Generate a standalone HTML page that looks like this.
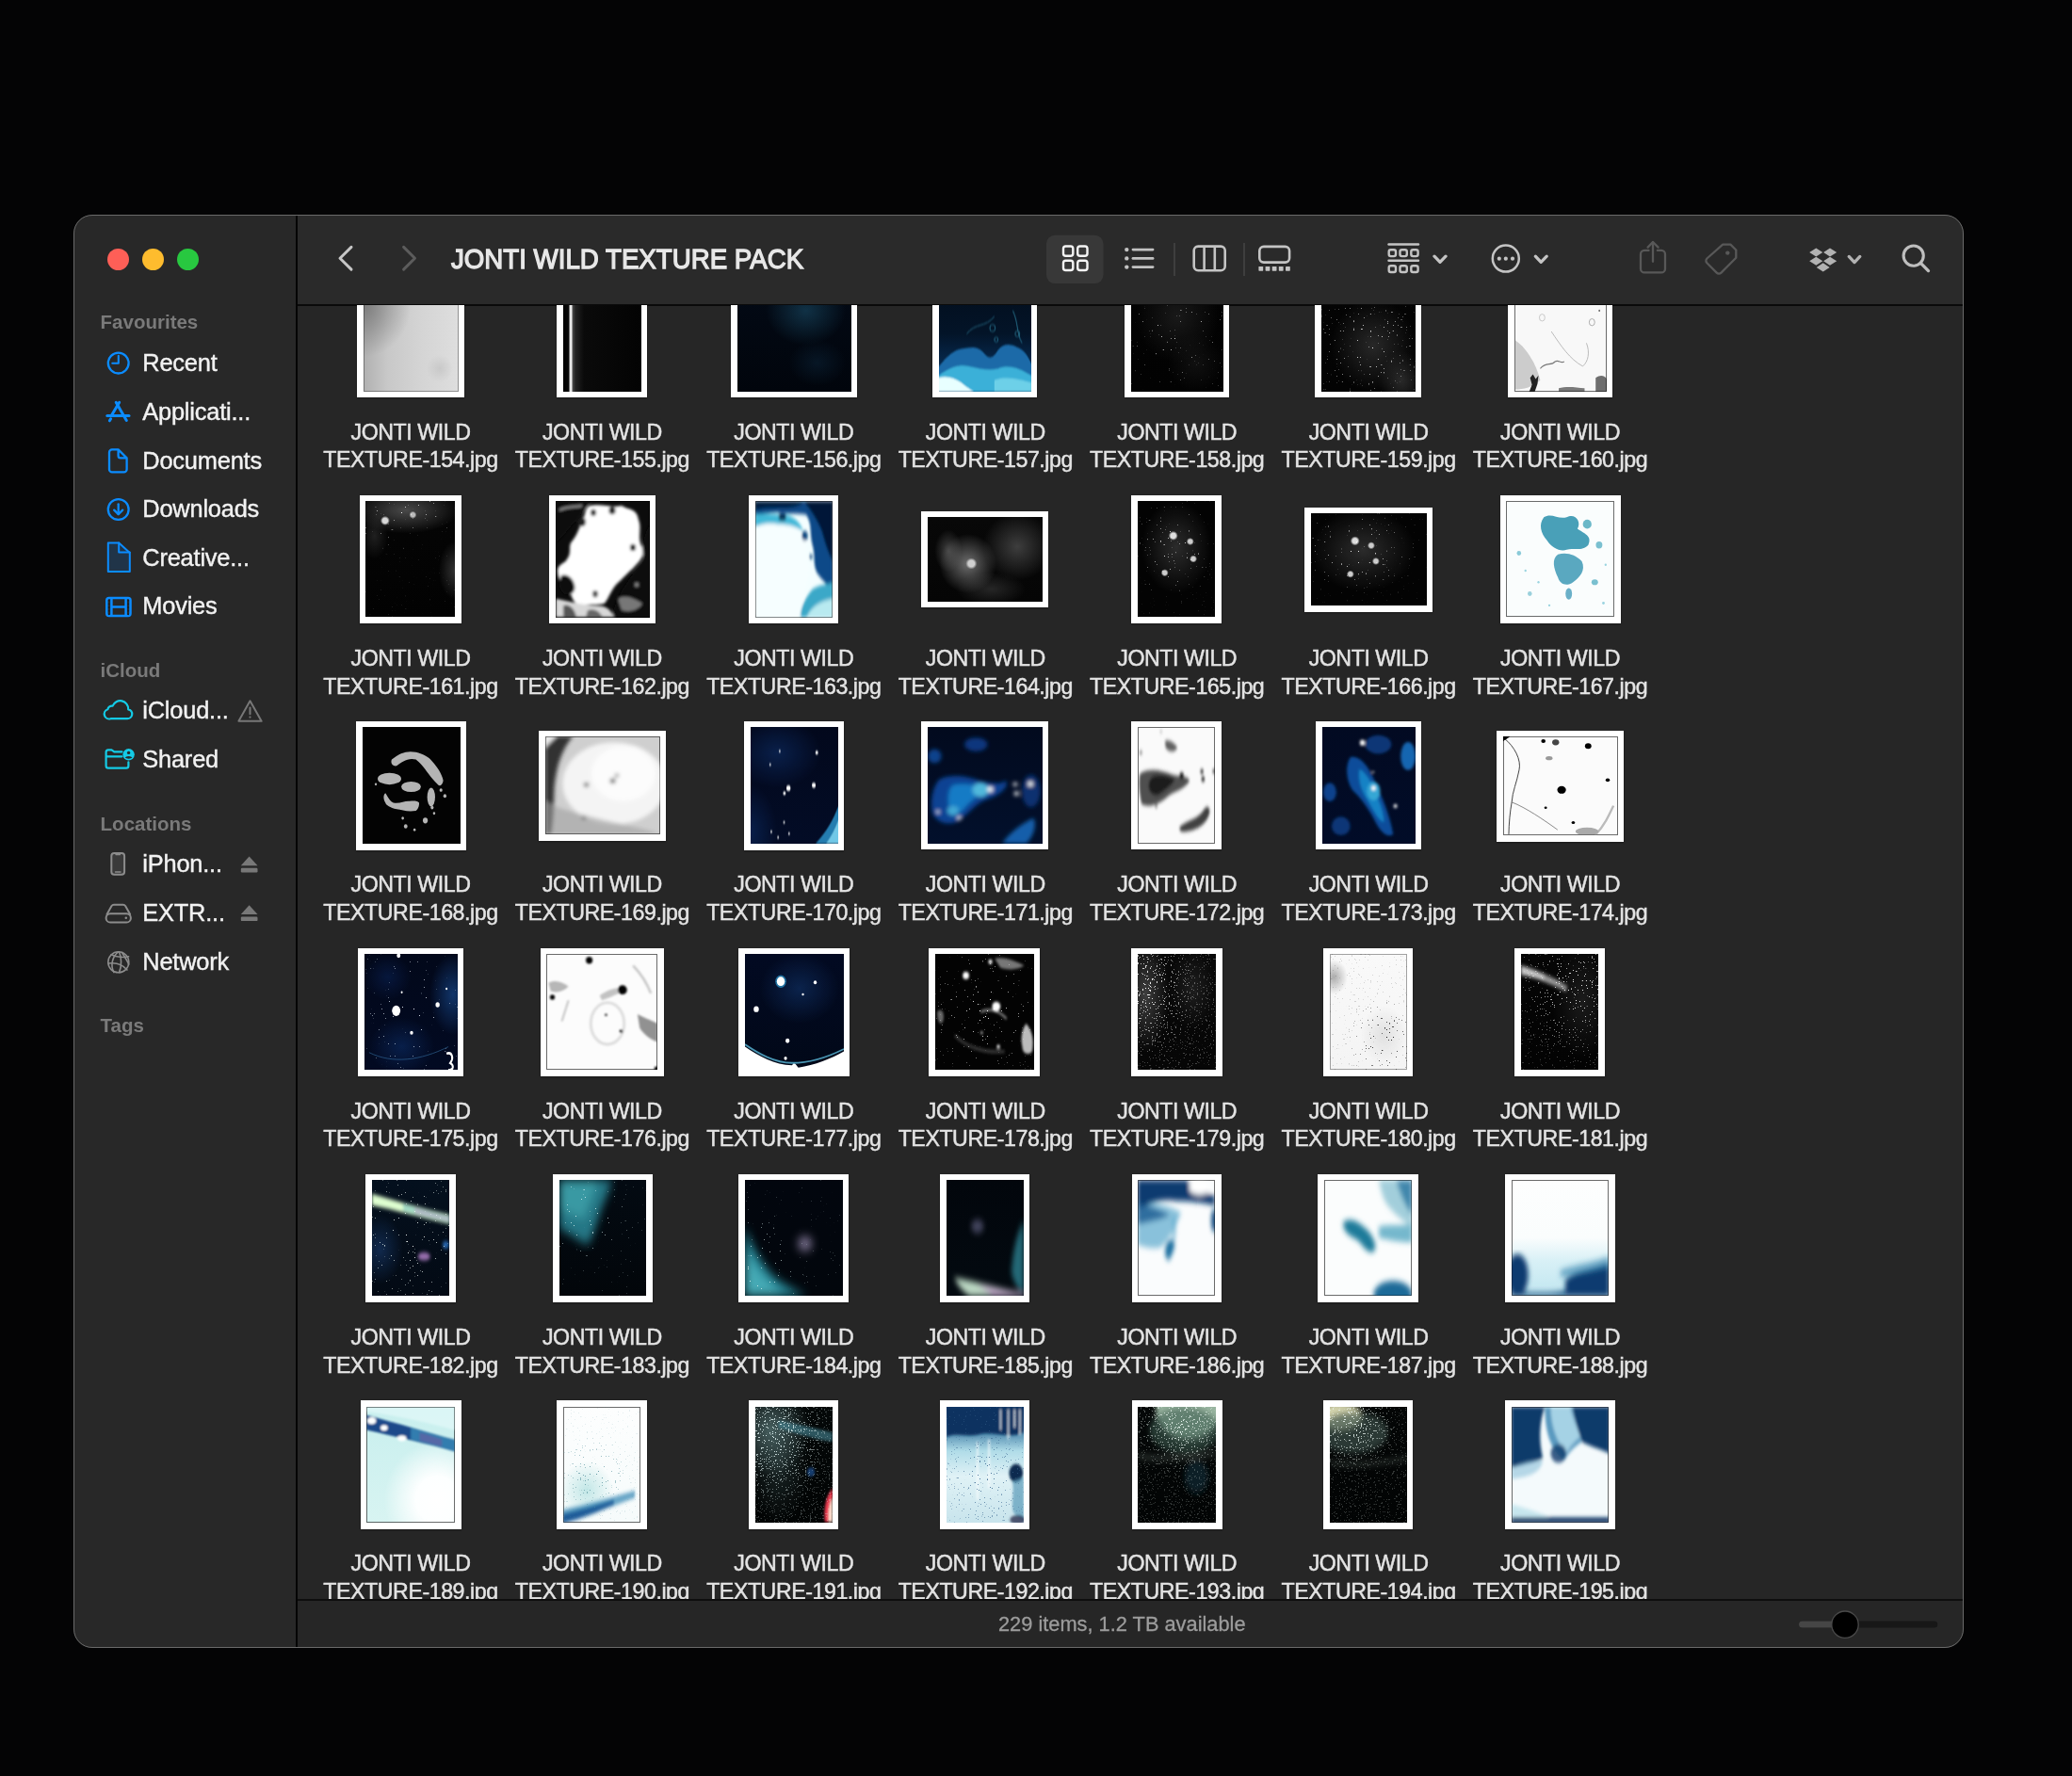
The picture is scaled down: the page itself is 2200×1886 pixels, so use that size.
<!DOCTYPE html>
<html><head><meta charset="utf-8">
<style>
*{margin:0;padding:0;box-sizing:border-box}
html,body{width:2200px;height:1886px;overflow:hidden;background:#040405;font-family:"Liberation Sans",sans-serif}
#root{position:absolute;left:0;top:0;width:2200px;height:1886px;will-change:transform}
.abs{position:absolute}
#win{position:absolute;left:78px;top:228px;width:2007px;height:1522px;border-radius:20px;background:#262626;overflow:hidden}
#winb{position:absolute;left:78px;top:228px;width:2007px;height:1522px;border-radius:20px;border:1px solid #6a6a6a}
#side{position:absolute;left:1px;top:1px;width:235px;height:1520px;background:#282828;border-radius:19px 0 0 19px}
#sdiv{position:absolute;left:236px;top:0;width:2px;height:1522px;background:#050505}
#tb{position:absolute;left:238px;top:1px;width:1768px;height:94px;background:#2a2a2a;border-radius:0 19px 0 0}
#tbline{position:absolute;left:238px;top:94.5px;width:1768px;height:2px;background:#0a0a0a}
#stline{position:absolute;left:238px;top:1469.5px;width:1768px;height:2px;background:#0e0e0e}
#status{position:absolute;left:238px;top:1471.5px;width:1768px;height:50px;background:#262626;border-radius:0 0 19px 0}
.hdr{position:absolute;left:106.6px;font-size:20.5px;font-weight:700;color:#7a7a7a;white-space:nowrap;line-height:24px}
.it{position:absolute;left:151.3px;font-size:25.4px;letter-spacing:-0.2px;color:#f2f2f2;white-space:nowrap;line-height:30px;-webkit-text-stroke:0.4px #f2f2f2}
#content{position:absolute;left:0;top:0;width:2200px;height:1886px;clip-path:inset(324px 116px 188px 317px)}
.th{position:absolute;background:#fff;padding:6.5px;box-shadow:0 1px 2px rgba(0,0,0,.35)}
.in{width:100%;height:100%}
.lb{position:absolute;width:220px;text-align:center;font-size:23.2px;letter-spacing:-0.45px;line-height:29.6px;color:#e4e4e4;white-space:nowrap;-webkit-text-stroke:0.45px #e4e4e4}
#title{position:absolute;left:479px;top:258.3px;font-size:29.5px;font-weight:400;color:#e8e8e8;white-space:nowrap;line-height:34px;transform:scaleX(0.938);transform-origin:0 0;-webkit-text-stroke:1.3px #e8e8e8}
#stat{position:absolute;left:1060px;top:1712.2px;font-size:21.8px;color:#9c9c9c;white-space:nowrap;line-height:26px;-webkit-text-stroke:0.3px #9c9c9c}
svg{position:absolute;overflow:visible}
</style></head><body><div id="root">
<div id="win">
  <div id="side"></div>
  <div id="sdiv"></div>
  <div id="tb"></div>
  <div id="tbline"></div>
  <div id="stline"></div>
  <div id="status"></div>
</div>

<!-- traffic lights -->
<div class="abs" style="left:114px;top:264px;width:23px;height:23px;border-radius:50%;background:#fe5f57"></div>
<div class="abs" style="left:151px;top:264px;width:23px;height:23px;border-radius:50%;background:#febc2e"></div>
<div class="abs" style="left:188px;top:264px;width:23px;height:23px;border-radius:50%;background:#28c840"></div>

<!-- sidebar -->
<div class="hdr" style="top:330.4px">Favourites</div>
<div class="it" style="top:370.1px">Recent</div>
<div class="it" style="top:421.7px">Applicati...</div>
<div class="it" style="top:473.8px">Documents</div>
<div class="it" style="top:525.2px">Downloads</div>
<div class="it" style="top:576.8px">Creative...</div>
<div class="it" style="top:628.2px">Movies</div>
<div class="hdr" style="top:699.8px">iCloud</div>
<div class="it" style="top:739.2px">iCloud...</div>
<div class="it" style="top:791.2px">Shared</div>
<div class="hdr" style="top:862.9px">Locations</div>
<div class="it" style="top:902.2px">iPhon...</div>
<div class="it" style="top:953.8px">EXTR...</div>
<div class="it" style="top:1006.1px">Network</div>
<div class="hdr" style="top:1076.9px">Tags</div>

<!-- toolbar -->
<div id="title">JONTI WILD TEXTURE PACK</div>
<div id="stat">229 items, 1.2 TB available</div>

<svg width="2200" height="1886" style="position:absolute;left:0;top:0" fill="none" stroke-linecap="round" stroke-linejoin="round">
<!-- back / forward -->
<polyline points="373,262.4 361,274.2 373,286.1" stroke="#c6c6c6" stroke-width="3"/>
<polyline points="428.6,262.4 440.5,274.2 428.6,286.1" stroke="#5c5c5c" stroke-width="3"/>
<!-- selected grid button -->
<rect x="1111" y="249.8" width="60.5" height="51.3" rx="9" fill="#383838" stroke="none"/>
<g stroke="#f4f4f4" stroke-width="2.4">
<rect x="1129" y="261.5" width="10.3" height="10.3" rx="2.6"/>
<rect x="1144.2" y="261.5" width="10.3" height="10.3" rx="2.6"/>
<rect x="1129" y="276.7" width="10.3" height="10.3" rx="2.6"/>
<rect x="1144.2" y="276.7" width="10.3" height="10.3" rx="2.6"/>
</g>
<!-- list -->
<g fill="#c2c2c2" stroke="none">
<circle cx="1196.3" cy="265.1" r="2.2"/><circle cx="1196.3" cy="274.4" r="2.2"/><circle cx="1196.3" cy="283.6" r="2.2"/>
</g>
<g stroke="#c2c2c2" stroke-width="2.9">
<line x1="1203" y1="265.1" x2="1224" y2="265.1"/><line x1="1203" y1="274.4" x2="1224" y2="274.4"/><line x1="1203" y1="283.6" x2="1224" y2="283.6"/>
</g>
<!-- dividers -->
<line x1="1247" y1="258" x2="1247" y2="293" stroke="#3e3e3e" stroke-width="2" stroke-linecap="butt"/>
<line x1="1321" y1="258" x2="1321" y2="293" stroke="#3e3e3e" stroke-width="2" stroke-linecap="butt"/>
<!-- column view -->
<g stroke="#c4c4c4" stroke-width="2.6">
<rect x="1267.7" y="261.6" width="33" height="25.6" rx="4.5"/>
<line x1="1278.6" y1="262" x2="1278.6" y2="287" stroke-linecap="butt"/>
<line x1="1289.8" y1="262" x2="1289.8" y2="287" stroke-linecap="butt"/>
</g>
<!-- gallery -->
<rect x="1337.3" y="261.9" width="31.8" height="16.7" rx="4.5" stroke="#c4c4c4" stroke-width="2.6"/>
<g fill="#c4c4c4" stroke="none">
<rect x="1336.4" y="283" width="4.8" height="4.7" rx=".6"/><rect x="1343.6" y="283" width="4.8" height="4.7" rx=".6"/><rect x="1350.7" y="283" width="4.8" height="4.7" rx=".6"/><rect x="1357.8" y="283" width="4.8" height="4.7" rx=".6"/><rect x="1365" y="283" width="4.8" height="4.7" rx=".6"/>
</g>
<!-- group -->
<g stroke="#c4c4c4" stroke-width="2.4">
<line x1="1474.5" y1="259.5" x2="1506" y2="259.5"/>
<line x1="1474.5" y1="276.7" x2="1506" y2="276.7"/>
<rect x="1474.7" y="265.3" width="7.3" height="6.8" rx="2"/><rect x="1486.5" y="265.3" width="7.3" height="6.8" rx="2"/><rect x="1498.3" y="265.3" width="7.3" height="6.8" rx="2"/>
<rect x="1474.7" y="282.2" width="7.3" height="6.8" rx="2"/><rect x="1486.5" y="282.2" width="7.3" height="6.8" rx="2"/><rect x="1498.3" y="282.2" width="7.3" height="6.8" rx="2"/>
</g>
<polyline points="1523,272.2 1529,278.3 1535,272.2" stroke="#c4c4c4" stroke-width="3.3"/>
<!-- more -->
<circle cx="1598.8" cy="274.6" r="14" stroke="#c4c4c4" stroke-width="2.5"/>
<g fill="#c4c4c4" stroke="none"><circle cx="1591.8" cy="274.7" r="2.1"/><circle cx="1598.8" cy="274.7" r="2.1"/><circle cx="1606" cy="274.7" r="2.1"/></g>
<polyline points="1630.3,272.2 1636.2,278.3 1642.2,272.2" stroke="#c4c4c4" stroke-width="3.3"/>
<!-- share -->
<g stroke="#585858" stroke-width="2.3">
<path d="M1750.5,265.9 H1746 a4,4 0 0 0 -4,4 V285.4 a4,4 0 0 0 4,4 H1764 a4,4 0 0 0 4,-4 V269.9 a4,4 0 0 0 -4,-4 H1759.8"/>
<line x1="1755" y1="257.5" x2="1755" y2="277.8"/>
<polyline points="1749.6,262.6 1755,257 1760.6,262.6"/>
</g>
<!-- tag -->
<path d="M1829.2,259.6 L1837.4,259.6 L1843.3,265.5 L1843.3,273.8 L1827.5,289.6 a3.4,3.4 0 0 1 -4.8,0 L1812.4,279.3 a3.4,3.4 0 0 1 0,-4.8 Z" stroke="#585858" stroke-width="2.3"/>
<circle cx="1834.3" cy="268.6" r="2.2" fill="#585858" stroke="none"/>
<!-- dropbox -->
<g fill="#b2b2b2" stroke="none">
<polygon points="1921.2,267.9 1928.3,263.4 1935.3,267.9 1928.3,272.4"/>
<polygon points="1936.1,267.9 1943,263.4 1950.2,267.9 1943,272.4"/>
<polygon points="1921.2,277.3 1928.3,272.8 1935.3,277.3 1928.3,281.8"/>
<polygon points="1936.1,277.3 1943,272.8 1950.2,277.3 1943,281.8"/>
<polygon points="1928.7,283.9 1935.7,279.3 1942.7,283.9 1935.7,288.4"/>
</g>
<polyline points="1963.2,272.4 1969,278.6 1974.8,272.4" stroke="#b2b2b2" stroke-width="3.3"/>
<!-- search -->
<circle cx="2031.7" cy="271.6" r="10.6" stroke="#bebebe" stroke-width="3.1"/>
<line x1="2039.6" y1="279.6" x2="2047.5" y2="287.6" stroke="#bebebe" stroke-width="3.3"/>

<!-- sidebar icons -->
<g stroke="#0b8cff" stroke-width="2.3">
<circle cx="125.7" cy="385.6" r="10.9"/>
<polyline points="125.8,377.7 125.8,385.8 119.3,385.8" stroke-width="2.1"/>
</g>
<!-- app store -->
<g stroke="#0b8cff" stroke-width="3">
<line x1="126.7" y1="427.3" x2="118.2" y2="441.5"/>
<line x1="123.2" y1="427.3" x2="134.3" y2="446.5"/>
<line x1="113.8" y1="441.5" x2="137" y2="441.5"/>
<line x1="117.6" y1="444.8" x2="116.4" y2="446.8"/>
</g>
<!-- documents -->
<path d="M125.6,477.4 H119 a3,3 0 0 0 -3,3 V498.4 a3,3 0 0 0 3,3 H131.6 a3,3 0 0 0 3,-3 V486.4 Z M125.6,477.4 V484 a2.4,2.4 0 0 0 2.4,2.4 H134.6" stroke="#0b8cff" stroke-width="2.3"/>
<!-- downloads -->
<g stroke="#0b8cff" stroke-width="2.3">
<circle cx="125.7" cy="541" r="10.9"/>
<line x1="125.7" y1="535.3" x2="125.7" y2="546"/>
<polyline points="121.2,541.6 125.7,546.1 130.2,541.6"/>
</g>
<!-- creative (filled doc) -->
<path d="M114.8,576.4 H126.2 L137.8,586.9 V607 H114.8 Z" fill="#203448" stroke="#0b8cff" stroke-width="2" stroke-linejoin="round"/>
<path d="M126.2,576.4 V586.4 H137.8" stroke="#0b8cff" stroke-width="2"/>
<!-- movies -->
<g stroke="#0b8cff" stroke-width="2.5">
<rect x="113.3" y="635.1" width="25.2" height="19" rx="2.5"/>
<line x1="118.4" y1="635.5" x2="118.4" y2="653.8" stroke-linecap="butt"/>
<line x1="133.6" y1="635.5" x2="133.6" y2="653.8" stroke-linecap="butt"/>
<line x1="118.4" y1="644.5" x2="133.6" y2="644.5" stroke-linecap="butt"/>
</g>
<g fill="#1a1a1a" stroke="none">
<circle cx="115.7" cy="637.7" r=".9"/><circle cx="115.7" cy="641.4" r=".9"/><circle cx="115.7" cy="645" r=".9"/><circle cx="115.7" cy="648.7" r=".9"/><circle cx="115.7" cy="652.3" r=".9"/>
<circle cx="136.2" cy="637.7" r=".9"/><circle cx="136.2" cy="641.4" r=".9"/><circle cx="136.2" cy="645" r=".9"/><circle cx="136.2" cy="648.7" r=".9"/><circle cx="136.2" cy="652.3" r=".9"/>
</g>
<!-- iCloud cloud -->
<path d="M117.5,763.2 H135 a5,5 0 0 0 1.2,-9.9 a8.6,8.6 0 0 0 -16.6,-3.6 a4.4,4.4 0 0 0 -5.2,3.6 a5,5 0 0 0 3.1,9.9 Z" stroke="#14cbe6" stroke-width="2.2"/>
<!-- shared folder -->
<g stroke="#14cbe6" stroke-width="2.2">
<path d="M129.5,798.3 H121.3 L118.5,796.4 H115 a2.4,2.4 0 0 0 -2.4,2.4 V813.2 a2.4,2.4 0 0 0 2.4,2.4 H134 a2.4,2.4 0 0 0 2.4,-2.4 V809.3"/>
<line x1="113" y1="803.3" x2="129.5" y2="803.3"/>
</g>
<circle cx="136.6" cy="801.3" r="6.2" fill="#14cbe6" stroke="none"/>
<circle cx="136.6" cy="799.4" r="1.7" fill="#282828" stroke="none"/>
<path d="M132.8,804.6 a4,2.2 0 0 1 7.6,0 a4.2,2 0 0 1 -7.6,0Z" fill="#282828" stroke="none"/>
<!-- warning -->
<path d="M265.5,744.3 L277.6,765.8 H253.4 Z" stroke="#777" stroke-width="2"/>
<line x1="265.5" y1="751.5" x2="265.5" y2="758.3" stroke="#777" stroke-width="2"/>
<circle cx="265.5" cy="761.6" r="1.1" fill="#777" stroke="none"/>
<!-- phone -->
<rect x="118.3" y="906.1" width="13.8" height="22.6" rx="3" fill="#3a3a3a" stroke="#8c8c8c" stroke-width="2"/>
<line x1="122.5" y1="926" x2="128" y2="926" stroke="#8c8c8c" stroke-width="1.3"/>
<line x1="123" y1="907.5" x2="127.5" y2="907.5" stroke="#8c8c8c" stroke-width="1.3"/>
<!-- drive -->
<g stroke="#8c8c8c" stroke-width="2">
<path d="M113.5,971 L118.5,962 a3,3 0 0 1 2.6,-1.2 H130.5 a3,3 0 0 1 2.6,1.2 L138.2,971"/>
<rect x="112.6" y="970.3" width="26.3" height="9.2" rx="4.6"/>
</g>
<circle cx="133.8" cy="974.7" r="1.3" fill="#8c8c8c" stroke="none"/>
<!-- globe -->
<g stroke="#8c8c8c" stroke-width="1.6">
<circle cx="125.8" cy="1021.8" r="11"/>
<path d="M125.5,1010.8 C119,1016 117,1026 121,1032.6"/>
<path d="M126.5,1010.8 C129,1016 129.5,1026 126.5,1032.6"/>
<path d="M118,1013.8 C124,1016.5 132,1017 136.6,1015.8"/>
<path d="M115.2,1023 C122,1022 130,1024 135,1030"/>
<path d="M129.5,1011.5 C133,1017 136,1022 136.7,1024"/>
</g>
<!-- eject -->
<g fill="#787878" stroke="none">
<path d="M264.6,909.6 L273.5,919.2 H255.8 Z"/><rect x="255.8" y="921.8" width="17.7" height="4.6" rx="1.2"/>
<path d="M264.6,961.3 L273.5,971 H255.8 Z"/><rect x="255.8" y="973.5" width="17.7" height="4.6" rx="1.2"/>
</g>
<!-- status slider -->
<rect x="1910" y="1721.5" width="147.3" height="7" rx="3.5" fill="#171717"/>
<rect x="1910" y="1721.5" width="45" height="7" rx="3.5" fill="#464646"/>
<circle cx="1959" cy="1725.2" r="14.2" fill="#000" stroke="#4a4a4a" stroke-width="1.3"/>
</svg>

<div id="content">
<div class="th" style="left:379.0px;top:286.0px;width:114.0px;height:136.0px"><div class="in" style="position:relative;overflow:hidden;background:radial-gradient(ellipse 50% 45% at 0% 25%,rgba(110,110,110,0.8) 0%,rgba(110,110,110,0) 100%),radial-gradient(ellipse 14% 12% at 80% 80%,rgba(190,190,190,0.6) 0%,rgba(190,190,190,0) 100%),linear-gradient(90deg,#b0b0b0 0%,#c8c8c8 25%,#d4d4d4 60%,#dedede 100%);box-shadow:inset 0 0 0 1px rgba(0,0,0,.35);"></div></div>
<div class="th" style="left:591.0px;top:286.0px;width:96.0px;height:136.0px"><div class="in" style="position:relative;overflow:hidden;background:linear-gradient(90deg,#000 0px,#0a0a0a 6px,#e0e0e0 7px,#f0f0f0 9px,#4a4a4a 10px,#222 13px,#0a0a0a 22px,#030303 100%);"></div></div>
<div class="th" style="left:776.0px;top:286.0px;width:134.0px;height:136.0px"><div class="in" style="position:relative;overflow:hidden;background:radial-gradient(ellipse 35% 30% at 60% 30%,rgba(30,90,120,0.5) 0%,rgba(30,90,120,0) 100%),radial-gradient(ellipse 25% 20% at 70% 75%,rgba(20,60,90,0.3) 0%,rgba(20,60,90,0) 100%),linear-gradient(180deg,#030a16,#01050c);"></div></div>
<div class="th" style="left:990.0px;top:286.0px;width:111.0px;height:136.0px"><div class="in" style="position:relative;overflow:hidden;background:linear-gradient(180deg,#020c1a 0%,#031428 50%,#05203e 65%,#0a3a6a 100%);"><svg viewBox="0 0 100 100" preserveAspectRatio="none" style="position:absolute;left:0;top:0;width:100%;height:100%"><defs><filter id="f157" x="-10%" y="-10%" width="120%" height="120%"><feGaussianBlur stdDeviation="0.8"/></filter></defs><g filter="url(#f157)">
<path d="M0,78 C8,70 16,64 24,63 C34,62 40,60 48,66 C54,72 58,72 64,64 C72,56 82,60 90,64 C95,67 98,72 100,76 V100 H0Z" fill="#1a6aa8"/>
<path d="M0,86 C10,80 20,76 32,78 C44,80 54,82 64,80 C76,76 88,80 100,86 V100 H0Z" fill="#3ab0d8"/>
<path d="M0,88 C8,86 16,88 24,92 C30,96 34,98 38,100 H0Z" fill="#e8ffff"/>
<path d="M60,90 C74,86 88,90 100,92 V100 H60Z" fill="#7ad8ec" opacity=".8"/>
<g fill="none" stroke="#3aa0c0" stroke-width=".8" opacity=".7"><circle cx="58" cy="45" r="3"/><circle cx="62" cy="55" r="2"/><circle cx="85" cy="50" r="2.5"/><path d="M30,50 C40,40 50,45 60,35"/><path d="M80,30 C86,40 84,50 90,58"/></g>
</g></svg></div></div>
<div class="th" style="left:1194.0px;top:286.0px;width:111.0px;height:136.0px"><div class="in" style="position:relative;overflow:hidden;background:radial-gradient(ellipse 45% 40% at 50% 35%,rgba(40,40,40,0.6) 0%,rgba(40,40,40,0) 100%),radial-gradient(ellipse 30% 25% at 70% 75%,rgba(30,30,30,0.5) 0%,rgba(30,30,30,0) 100%),linear-gradient(#030303,#020202);"><div style="position:absolute;inset:0;-webkit-mask-image:radial-gradient(ellipse 60% 60% at 50% 40%,#000 0%,rgba(0,0,0,.2) 100%);mask-image:radial-gradient(ellipse 60% 60% at 50% 40%,#000 0%,rgba(0,0,0,.2) 100%);"><svg style="position:absolute;left:0;top:0;width:100%;height:100%"><defs><filter id="s158" x="0" y="0" width="100%" height="100%"><feTurbulence type="fractalNoise" baseFrequency="0.5" numOctaves="2" seed="16"/><feColorMatrix type="matrix" values="0 0 0 0 0.9 0 0 0 0 0.9 0 0 0 0 0.9 30 0 0 0 -22.2"/><feGaussianBlur stdDeviation="0.35"/></filter></defs><rect width="100%" height="100%" filter="url(#s158)"/></svg></div></div></div>
<div class="th" style="left:1396.0px;top:286.0px;width:113.0px;height:136.0px"><div class="in" style="position:relative;overflow:hidden;background:radial-gradient(ellipse 45% 40% at 55% 60%,rgba(55,55,55,0.7) 0%,rgba(55,55,55,0) 100%),radial-gradient(ellipse 25% 25% at 85% 90%,rgba(80,80,80,0.5) 0%,rgba(80,80,80,0) 100%),linear-gradient(#040404,#030303);"><div style="position:absolute;inset:0;-webkit-mask-image:radial-gradient(ellipse 60% 60% at 50% 60%,#000 0%,rgba(0,0,0,.2) 100%);mask-image:radial-gradient(ellipse 60% 60% at 50% 60%,#000 0%,rgba(0,0,0,.2) 100%);"><svg style="position:absolute;left:0;top:0;width:100%;height:100%"><defs><filter id="s159" x="0" y="0" width="100%" height="100%"><feTurbulence type="fractalNoise" baseFrequency="0.5" numOctaves="2" seed="17"/><feColorMatrix type="matrix" values="0 0 0 0 0.9 0 0 0 0 0.9 0 0 0 0 0.9 30 0 0 0 -21.599999999999998"/><feGaussianBlur stdDeviation="0.35"/></filter></defs><rect width="100%" height="100%" filter="url(#s159)"/></svg></div></div></div>
<div class="th" style="left:1601.0px;top:286.0px;width:111.0px;height:136.0px"><div class="in" style="position:relative;overflow:hidden;background:#f8f8f8;box-shadow:inset 0 0 0 1px rgba(0,0,0,.35);"><svg viewBox="0 0 100 100" preserveAspectRatio="none" style="position:absolute;left:0;top:0;width:100%;height:100%"><defs><filter id="f160" x="-10%" y="-10%" width="120%" height="120%"><feGaussianBlur stdDeviation="0.6"/></filter></defs><g filter="url(#f160)">
<path d="M0,55 C10,60 22,72 28,90 C20,96 10,98 0,98Z" fill="#a8a8a8" opacity=".55"/>
<path d="M17,88 L20,85 L23,89 L26,86 L25,93 L22,100 H16 L19,94Z" fill="#222"/>
<path d="M48,97 C56,95 66,96 76,97 V100 H48Z" fill="#444" opacity=".7"/>
<path d="M88,88 C93,85 98,86 100,89 V100 H88Z" fill="#333" opacity=".7"/>
<path d="M28,80 C34,74 40,78 44,74 C48,72 50,76 54,74" stroke="#777" stroke-width="1" fill="none"/>
<path d="M40,48 C50,60 60,72 74,78 C80,74 82,66 78,58" stroke="#aaa" stroke-width=".7" fill="none"/>
<circle cx="84" cy="40" r="3" stroke="#999" stroke-width=".7" fill="none"/><circle cx="30" cy="36" r="3" stroke="#bbb" stroke-width=".7" fill="none"/>
<g fill="#666"><circle cx="86" cy="20" r="1"/><circle cx="92" cy="30" r=".9"/><circle cx="78" cy="14" r=".9"/></g>
</g></svg><div style="position:absolute;inset:0;box-shadow:inset 0 0 0 1px rgba(0,0,0,.35)"></div></div></div>
<div class="th" style="left:381.7px;top:525.8px;width:108.3px;height:136.2px"><div class="in" style="position:relative;overflow:hidden;background:radial-gradient(circle 5px at 22% 17%,#d8d8d8 0%,#d8d8d8 55%,rgba(0,0,0,0) 100%),radial-gradient(circle 4px at 53% 12%,#bbb 0%,#bbb 55%,rgba(0,0,0,0) 100%),radial-gradient(ellipse 60% 20% at 45% 8%,rgba(80,80,80,0.9) 0%,rgba(80,80,80,0) 100%),radial-gradient(ellipse 18% 25% at 100% 60%,rgba(70,70,70,0.7) 0%,rgba(70,70,70,0) 100%),radial-gradient(ellipse 15% 20% at 10% 30%,rgba(50,50,50,0.6) 0%,rgba(50,50,50,0) 100%),linear-gradient(#050505,#020202);"><div style="position:absolute;inset:0;-webkit-mask-image:radial-gradient(ellipse 70% 35% at 40% 10%,#000 0%,rgba(0,0,0,.1) 100%);mask-image:radial-gradient(ellipse 70% 35% at 40% 10%,#000 0%,rgba(0,0,0,.1) 100%);"><svg style="position:absolute;left:0;top:0;width:100%;height:100%"><defs><filter id="s161" x="0" y="0" width="100%" height="100%"><feTurbulence type="fractalNoise" baseFrequency="0.5" numOctaves="2" seed="18"/><feColorMatrix type="matrix" values="0 0 0 0 0.9 0 0 0 0 0.9 0 0 0 0 0.9 30 0 0 0 -22.2"/><feGaussianBlur stdDeviation="0.35"/></filter></defs><rect width="100%" height="100%" filter="url(#s161)"/></svg></div></div></div>
<div class="th" style="left:583.0px;top:525.5px;width:113.0px;height:136.5px"><div class="in" style="position:relative;overflow:hidden;background:#0c0c0c;box-shadow:inset 0 0 0 1px rgba(0,0,0,.35);"><svg viewBox="0 0 100 100" preserveAspectRatio="none" style="position:absolute;left:0;top:0;width:100%;height:100%"><defs><filter id="f162" x="-10%" y="-10%" width="120%" height="120%"><feGaussianBlur stdDeviation="1.4"/></filter></defs><g filter="url(#f162)">
<path d="M36,4 C48,2 60,6 70,4 C78,8 86,6 88,16 C92,24 86,32 92,40 C96,48 86,54 82,58 C76,62 72,66 64,72 C58,78 56,84 52,88 C44,90 36,88 28,90 C22,90 18,86 16,80 C10,74 2,70 2,60 C2,54 10,54 12,50 C18,44 12,38 18,34 C24,28 26,20 30,14 C32,8 32,6 36,4Z" fill="#fff"/>
<path d="M0,0 H38 C30,6 26,14 18,20 C12,26 6,32 0,36Z" fill="#0a0a0a"/>
<path d="M4,8 C12,4 20,6 28,4" stroke="#888" stroke-width="2" fill="none"/>
<path d="M100,20 C94,28 90,40 94,50 C88,58 80,64 74,72 C68,80 62,88 60,100 H100Z" fill="#0a0a0a"/>
<path d="M6,64 C12,62 18,66 20,72 C22,78 16,82 10,80 C4,78 2,70 6,64Z" fill="#111"/>
<path d="M0,84 C14,86 30,90 44,90 C52,90 58,92 62,100 H0Z" fill="#d8d8d8"/>
<path d="M66,84 C74,80 84,84 92,88 C88,94 78,96 70,94Z" fill="#777"/>
<path d="M8,90 C14,88 20,92 22,100 H8Z" fill="#555"/>
<path d="M34,94 C40,92 46,94 50,100 H32Z" fill="#666"/>
<circle cx="28" cy="18" r="4" fill="#222"/><circle cx="40" cy="10" r="3" fill="#333"/><circle cx="60" cy="8" r="3.5" fill="#222"/>
<circle cx="82" cy="40" r="3" fill="#111"/><circle cx="42" cy="80" r="3" fill="#555"/><circle cx="86" cy="72" r="2" fill="#888"/>
</g></svg><div style="position:absolute;inset:0;box-shadow:inset 0 0 0 1px rgba(0,0,0,.35)"></div></div></div>
<div class="th" style="left:795.0px;top:525.5px;width:95.0px;height:136.5px"><div class="in" style="position:relative;overflow:hidden;background:#f4feff;box-shadow:inset 0 0 0 1px rgba(0,0,0,.35);"><svg viewBox="0 0 100 100" preserveAspectRatio="none" style="position:absolute;left:0;top:0;width:100%;height:100%"><defs><filter id="f163" x="-10%" y="-10%" width="120%" height="120%"><feGaussianBlur stdDeviation="1.6"/></filter></defs><g filter="url(#f163)">
<path d="M0,0 H100 V78 C94,72 86,68 80,62 C74,54 78,46 74,38 C70,28 74,20 66,12 C56,10 40,12 28,10 C18,10 8,12 0,12Z" fill="#0c4a88"/>
<path d="M62,0 H100 V52 C94,44 90,36 86,26 C80,16 72,8 62,0Z" fill="#021838"/>
<path d="M0,0 H64 C60,4 50,6 40,6 C24,6 10,6 0,8Z" fill="#031c40"/>
<path d="M56,100 C60,90 66,82 74,76 C82,72 92,72 100,70 V100Z" fill="#3aa8c8"/>
<path d="M66,100 C72,92 82,86 100,84 V100Z" fill="#b8eaf0"/>
<path d="M0,18 C10,14 22,16 34,18 C46,20 56,22 62,30 C68,40 66,50 70,58 C70,68 62,78 58,100 H0Z" fill="#f6feff"/>
<path d="M0,12 C12,10 26,12 40,12 C50,14 58,18 62,26 C54,22 42,20 30,20 C18,18 8,20 0,22Z" fill="#40b8d8"/>
<ellipse cx="35" cy="14" rx="5" ry="3" fill="#062a50"/><circle cx="64" cy="30" r="4" fill="#0a4a80"/><circle cx="72" cy="48" r="2" fill="#0a4a80"/>
</g></svg><div style="position:absolute;inset:0;box-shadow:inset 0 0 0 1px rgba(0,0,0,.35)"></div></div></div>
<div class="th" style="left:978.0px;top:542.8px;width:135.0px;height:102.7px"><div class="in" style="position:relative;overflow:hidden;background:radial-gradient(circle 6px at 38% 55%,#cfcfcf 0%,#cfcfcf 55%,rgba(0,0,0,0) 100%),radial-gradient(ellipse 25% 35% at 35% 55%,rgba(120,120,120,0.9) 0%,rgba(120,120,120,0) 100%),radial-gradient(ellipse 12% 25% at 18% 40%,rgba(90,90,90,0.7) 0%,rgba(90,90,90,0) 100%),radial-gradient(ellipse 30% 40% at 78% 35%,rgba(75,75,75,0.8) 0%,rgba(75,75,75,0) 100%),radial-gradient(ellipse 30% 20% at 55% 85%,rgba(60,60,60,0.6) 0%,rgba(60,60,60,0) 100%),linear-gradient(#080808,#050505);"></div></div>
<div class="th" style="left:1201.4px;top:525.8px;width:95.6px;height:136.2px"><div class="in" style="position:relative;overflow:hidden;background:radial-gradient(circle 5px at 46% 30%,#ddd 0%,#ddd 55%,rgba(0,0,0,0) 100%),radial-gradient(circle 4px at 68% 35%,#ccc 0%,#ccc 55%,rgba(0,0,0,0) 100%),radial-gradient(circle 4px at 72% 50%,#ccc 0%,#ccc 55%,rgba(0,0,0,0) 100%),radial-gradient(circle 4px at 35% 62%,#ccc 0%,#ccc 55%,rgba(0,0,0,0) 100%),radial-gradient(ellipse 45% 40% at 50% 40%,rgba(60,60,60,0.7) 0%,rgba(60,60,60,0) 100%),linear-gradient(#030303,#030303);"><div style="position:absolute;inset:0;-webkit-mask-image:radial-gradient(ellipse 55% 50% at 45% 40%,#000 0%,rgba(0,0,0,.1) 100%);mask-image:radial-gradient(ellipse 55% 50% at 45% 40%,#000 0%,rgba(0,0,0,.1) 100%);"><svg style="position:absolute;left:0;top:0;width:100%;height:100%"><defs><filter id="s165" x="0" y="0" width="100%" height="100%"><feTurbulence type="fractalNoise" baseFrequency="0.5" numOctaves="2" seed="14"/><feColorMatrix type="matrix" values="0 0 0 0 1 0 0 0 0 1 0 0 0 0 1 30 0 0 0 -21.599999999999998"/><feGaussianBlur stdDeviation="0.35"/></filter></defs><rect width="100%" height="100%" filter="url(#s165)"/></svg></div></div></div>
<div class="th" style="left:1385.0px;top:538.6px;width:136.0px;height:111.4px"><div class="in" style="position:relative;overflow:hidden;background:radial-gradient(circle 5px at 38% 30%,#ddd 0%,#ddd 55%,rgba(0,0,0,0) 100%),radial-gradient(circle 4px at 52% 35%,#ccc 0%,#ccc 55%,rgba(0,0,0,0) 100%),radial-gradient(circle 4px at 56% 52%,#ccc 0%,#ccc 55%,rgba(0,0,0,0) 100%),radial-gradient(circle 4px at 34% 66%,#ccc 0%,#ccc 55%,rgba(0,0,0,0) 100%),radial-gradient(ellipse 45% 45% at 45% 40%,rgba(60,60,60,0.7) 0%,rgba(60,60,60,0) 100%),linear-gradient(#030303,#030303);"><div style="position:absolute;inset:0;-webkit-mask-image:radial-gradient(ellipse 55% 50% at 40% 40%,#000 0%,rgba(0,0,0,.1) 100%);mask-image:radial-gradient(ellipse 55% 50% at 40% 40%,#000 0%,rgba(0,0,0,.1) 100%);"><svg style="position:absolute;left:0;top:0;width:100%;height:100%"><defs><filter id="s166" x="0" y="0" width="100%" height="100%"><feTurbulence type="fractalNoise" baseFrequency="0.5" numOctaves="2" seed="15"/><feColorMatrix type="matrix" values="0 0 0 0 1 0 0 0 0 1 0 0 0 0 1 30 0 0 0 -21.599999999999998"/><feGaussianBlur stdDeviation="0.35"/></filter></defs><rect width="100%" height="100%" filter="url(#s166)"/></svg></div></div></div>
<div class="th" style="left:1592.6px;top:525.8px;width:128.0px;height:136.2px"><div class="in" style="position:relative;overflow:hidden;background:#fafdfd;box-shadow:inset 0 0 0 1px rgba(0,0,0,.35);"><svg viewBox="0 0 100 100" preserveAspectRatio="none" style="position:absolute;left:0;top:0;width:100%;height:100%"><defs><filter id="f167" x="-10%" y="-10%" width="120%" height="120%"><feGaussianBlur stdDeviation="0.6"/></filter></defs><g filter="url(#f167)">
<path d="M35,14 C42,10 48,16 56,14 C64,10 70,18 66,24 C72,28 80,30 76,38 C70,44 62,40 56,42 C50,44 42,40 38,34 C32,28 30,20 35,14Z" fill="#4aa0b8"/>
<path d="M48,46 C56,44 64,46 70,52 C74,60 68,66 62,70 C56,74 50,72 48,66 C44,58 42,50 48,46Z" fill="#5aa8c0"/>
<ellipse cx="75" cy="20" rx="4" ry="4" fill="#6ab8c8"/><ellipse cx="86" cy="38" rx="3" ry="3" fill="#7ac0d0"/><ellipse cx="58" cy="80" rx="3" ry="5" fill="#6ab0c8"/>
<ellipse cx="82" cy="70" rx="3" ry="2.5" fill="#7ac0d0"/><ellipse cx="12" cy="45" rx="2" ry="2" fill="#8acad8"/><ellipse cx="22" cy="80" rx="2" ry="2" fill="#9ad0dc"/>
<g fill="#9ad4e0"><circle cx="18" cy="60" r="1"/><circle cx="30" cy="70" r="1"/><circle cx="90" cy="88" r="1.2"/><circle cx="40" cy="90" r="1"/><circle cx="92" cy="55" r="1"/></g>
</g></svg><div style="position:absolute;inset:0;box-shadow:inset 0 0 0 1px rgba(0,0,0,.35)"></div></div></div>
<div class="th" style="left:378.0px;top:765.5px;width:117.0px;height:137.1px"><div class="in" style="position:relative;overflow:hidden;background:#030303;"><svg viewBox="0 0 100 100" preserveAspectRatio="none" style="position:absolute;left:0;top:0;width:100%;height:100%"><defs><filter id="f168" x="-10%" y="-10%" width="120%" height="120%"><feGaussianBlur stdDeviation="0.5"/></filter></defs><g filter="url(#f168)">
<g fill="#b4b4b4">
<path d="M29.8,27.8 C38,22 46,20 54.4,21.6 C62,23 68,26 70.8,29.2 C76,34 81,40 82.3,45.7 C82,49 79,51 77.4,49.8 C73,46 70,43 67.5,40.2 C62,34 58,30 54.4,27.8 C46,26 40,30 34.8,33.3 C31,34 28,31 29.8,27.8Z"/>
<ellipse cx="27.4" cy="44.3" rx="12" ry="5"/>
<ellipse cx="49.5" cy="51.2" rx="10" ry="4.5"/>
<ellipse cx="70" cy="60" rx="4" ry="8"/>
<path d="M23.3,56.7 C26,60 28,64 31.5,64.9 C38,66 43,63 47.9,63.5 C52,63 56,63 57.7,64.9 C58,68 56,71 54.4,71.8 C46,73 40,71 34.8,70.4 C28,69 24,67 23.3,64.9 C21,62 21,58 23.3,56.7Z"/>
<circle cx="64" cy="80" r="2.5"/><circle cx="44" cy="85" r="1.8"/><circle cx="84" cy="59" r="1.6"/><circle cx="71" cy="69" r="1.5"/><circle cx="41" cy="78" r="1.3"/><circle cx="53" cy="88" r="1.2"/><circle cx="13.5" cy="49" r="1.1"/><circle cx="80" cy="54" r="1.5"/><circle cx="73" cy="74" r="1.2"/>
</g></g></svg></div></div>
<div class="th" style="left:572.0px;top:775.9px;width:135.0px;height:117.1px"><div class="in" style="position:relative;overflow:hidden;background:#cfcfcf;box-shadow:inset 0 0 0 1px rgba(0,0,0,.35);"><svg viewBox="0 0 100 100" preserveAspectRatio="none" style="position:absolute;left:0;top:0;width:100%;height:100%"><defs><filter id="f169" x="-10%" y="-10%" width="120%" height="120%"><feGaussianBlur stdDeviation="1.8"/></filter></defs><g filter="url(#f169)">
<ellipse cx="60" cy="48" rx="45" ry="42" fill="#f4f4f4"/>
<ellipse cx="68" cy="38" rx="28" ry="28" fill="#fcfcfc"/>
<path d="M14,0 H24 C14,14 10,30 8,50 C7,65 8,80 5,100 H0 V0Z" fill="#303030"/>
<path d="M0,0 H10 C5,5 2,8 0,12Z" fill="#f0f0f0"/>
<path d="M10,72 C30,80 55,86 90,96 L100,100 H0 V65Z" fill="#a0a0a0" opacity=".6"/>
<circle cx="35.7" cy="49.4" r="2" fill="#000"/><circle cx="58.7" cy="45.3" r="2.2" fill="#000"/><circle cx="62.2" cy="39.8" r="1.5" fill="#000"/><circle cx="33.6" cy="83.2" r="1.4" fill="#000"/>
</g></svg><div style="position:absolute;inset:0;box-shadow:inset 0 0 0 1px rgba(0,0,0,.35)"></div></div></div>
<div class="th" style="left:790.0px;top:765.5px;width:106.0px;height:137.1px"><div class="in" style="position:relative;overflow:hidden;background:radial-gradient(ellipse 50% 30% at 30% 22%,rgba(15,50,110,.55),rgba(15,50,110,0)),radial-gradient(ellipse 30% 40% at 0% 90%,rgba(15,50,110,.5),rgba(15,50,110,0)),linear-gradient(#02081c,#030c26);"><svg viewBox="0 0 100 100" preserveAspectRatio="none" style="position:absolute;left:0;top:0;width:100%;height:100%"><defs><filter id="f170" x="-10%" y="-10%" width="120%" height="120%"><feGaussianBlur stdDeviation="0.8"/></filter></defs><g filter="url(#f170)">
<path d="M100,68 C94,80 86,90 74,100 H100Z" fill="#2a90c8" opacity=".85"/>
<path d="M100,80 C96,88 92,94 86,100 H100Z" fill="#7ad0ec" opacity=".9"/>
<g fill="#fff"><circle cx="43.2" cy="52.3" r="2.4"/><circle cx="72.1" cy="49.9" r="2.2"/><circle cx="38.6" cy="56.7" r="1.6"/><circle cx="75.5" cy="21.9" r="1.6"/>
<circle cx="22.3" cy="32.2" r="1"/><circle cx="33.2" cy="20.8" r="1"/><circle cx="38.2" cy="81.5" r="1"/><circle cx="31.4" cy="94.5" r="1"/><circle cx="43.9" cy="91.2" r="1"/><circle cx="23.6" cy="89.7" r="1"/></g>
</g></svg></div></div>
<div class="th" style="left:978.0px;top:765.8px;width:135.0px;height:136.7px"><div class="in" style="position:relative;overflow:hidden;background:linear-gradient(#020a1e,#02102c);"><svg viewBox="0 0 100 100" preserveAspectRatio="none" style="position:absolute;left:0;top:0;width:100%;height:100%"><defs><filter id="f171" x="-10%" y="-10%" width="120%" height="120%"><feGaussianBlur stdDeviation="1.6"/></filter></defs><g filter="url(#f171)">
<g opacity=".9">
<path d="M10,45 C20,40 35,42 45,46 C55,48 62,50 68,46 C72,52 60,60 52,62 C44,64 38,72 28,80 C18,86 8,82 4,74 C2,64 4,52 10,45Z" fill="#0a4aa0"/>
<path d="M22,50 C30,48 42,50 50,52 C46,58 36,64 30,72 C24,76 18,72 18,64 C18,58 18,54 22,50Z" fill="#1a88d8"/>
<ellipse cx="46" cy="54" rx="7" ry="6" fill="#5acbf0"/>
<ellipse cx="22" cy="72" rx="5" ry="4" fill="#4ab8e8"/>
<ellipse cx="42" cy="15" rx="10" ry="6" fill="#0a3a88"/>
<path d="M65,100 C70,92 80,84 92,78 C96,86 90,96 86,100Z" fill="#1468b8"/>
<ellipse cx="90" cy="55" rx="8" ry="14" fill="#083478"/>
<ellipse cx="6" cy="25" rx="6" ry="6" fill="#0a4a98"/>
</g>
<g fill="#fff"><circle cx="54.4" cy="53.6" r="2.4"/><circle cx="76.2" cy="49.2" r="1.8"/><circle cx="77.3" cy="57.2" r="2"/><circle cx="89.4" cy="48.9" r="2.2"/><circle cx="27.4" cy="78.2" r="1.6"/><circle cx="8.9" cy="72.9" r="1.3"/></g>
</g></svg></div></div>
<div class="th" style="left:1201.4px;top:765.8px;width:95.6px;height:136.7px"><div class="in" style="position:relative;overflow:hidden;background:#fafafa;box-shadow:inset 0 0 0 1px rgba(0,0,0,.35);"><svg viewBox="0 0 100 100" preserveAspectRatio="none" style="position:absolute;left:0;top:0;width:100%;height:100%"><defs><filter id="f172" x="-10%" y="-10%" width="120%" height="120%"><feGaussianBlur stdDeviation="1.6"/></filter></defs><g filter="url(#f172)">
<path d="M3,40 C15,35 30,37 45,41 C55,43 62,41 67,46 C58,55 46,55 38,60 C28,66 15,70 5,66 C2,56 1,46 3,40Z" fill="#505050"/>
<path d="M20,42 C30,40 40,42 48,45 C44,50 36,54 28,58 C22,60 16,58 14,52 C14,46 16,44 20,42Z" fill="#1a1a1a"/>
<path d="M54,86 C62,80 78,80 86,70 C92,66 95,72 90,78 C84,86 70,90 58,90 C55,90 53,88 54,86Z" fill="#404040"/>
<path d="M35,12 C40,10 48,14 51,18 C48,22 40,22 36,18Z" fill="#606060"/>
<circle cx="56.5" cy="41.9" r="2.6" fill="#000"/><circle cx="82.5" cy="38.3" r="1.9" fill="#000"/><circle cx="84" cy="44.7" r="2.1" fill="#000"/><circle cx="98" cy="38" r="1.6" fill="#000"/><circle cx="23.8" cy="68" r="1.2" fill="#000"/>
<circle cx="4" cy="22" r="1.5" fill="#555"/><circle cx="30" cy="4" r="1" fill="#777"/>
</g></svg><div style="position:absolute;inset:0;box-shadow:inset 0 0 0 1px rgba(0,0,0,.35)"></div></div></div>
<div class="th" style="left:1397.0px;top:765.8px;width:112.0px;height:136.7px"><div class="in" style="position:relative;overflow:hidden;background:linear-gradient(#020a22,#010c28);"><svg viewBox="0 0 100 100" preserveAspectRatio="none" style="position:absolute;left:0;top:0;width:100%;height:100%"><defs><filter id="f173" x="-10%" y="-10%" width="120%" height="120%"><feGaussianBlur stdDeviation="1.4"/></filter></defs><g filter="url(#f173)">
<g opacity=".9">
<path d="M30,26 C40,24 50,34 56,46 C64,60 72,74 76,92 C70,96 62,90 56,80 C48,68 40,60 32,54 C26,46 24,34 30,26Z" fill="#0c54a8"/>
<path d="M40,36 C48,40 54,50 58,58 C62,66 66,74 66,82 C60,80 54,70 48,62 C42,54 38,46 40,36Z" fill="#1a90d8"/>
<ellipse cx="55" cy="55" rx="7" ry="8" fill="#3ab8e8"/>
<ellipse cx="92" cy="25" rx="8" ry="12" fill="#1470c0"/>
<ellipse cx="8" cy="56" rx="7" ry="8" fill="#0c4a98"/>
<ellipse cx="20" cy="85" rx="10" ry="8" fill="#0a3a80"/>
<ellipse cx="60" cy="15" rx="14" ry="8" fill="#0a3a80"/>
</g>
<g fill="#fff"><circle cx="43" cy="13.6" r="2.6"/><circle cx="55" cy="52.6" r="2.2"/><circle cx="78.4" cy="67.9" r="1.8"/><circle cx="54.4" cy="38.7" r="1"/></g>
</g></svg></div></div>
<div class="th" style="left:1589.0px;top:775.6px;width:135.0px;height:118.2px"><div class="in" style="position:relative;overflow:hidden;background:#fbfbfb;box-shadow:inset 0 0 0 1px rgba(0,0,0,.35);"><svg viewBox="0 0 100 100" preserveAspectRatio="none" style="position:absolute;left:0;top:0;width:100%;height:100%"><defs><filter id="f174" x="-10%" y="-10%" width="120%" height="120%"><feGaussianBlur stdDeviation="0.4"/></filter></defs><g filter="url(#f174)">
<path d="M0.6,1.7 C10,10 16,24 13.9,34 C12,46 8,56 7.5,66.4 C6,76 5,88 4.9,98.8" stroke="#333" stroke-width=".8" fill="none"/>
<path d="M7.5,66.4 C20,72 35,84 47.4,94.3" stroke="#555" stroke-width=".6" fill="none"/>
<path d="M80,100 C88,90 92,80 96,70" stroke="#bbb" stroke-width="2" fill="none"/>
<g fill="#000"><circle cx="50.9" cy="54" r="3.8"/><circle cx="74" cy="9.7" r="2.8"/><circle cx="35" cy="4.7" r="1.9"/><circle cx="91" cy="44" r="1.8"/><circle cx="61" cy="87" r="1.5"/><circle cx="37" cy="72" r="1.2"/></g>
<path d="M0,0 H6 C4,2 2,3 0,5Z" fill="#000"/>
<ellipse cx="45.7" cy="6" rx="3" ry="3" fill="#444"/>
<ellipse cx="73" cy="96" rx="10" ry="4" fill="#aaa"/>
<ellipse cx="40" cy="22" rx="3" ry="2" fill="#999"/>
</g></svg><div style="position:absolute;inset:0;box-shadow:inset 0 0 0 1px rgba(0,0,0,.35)"></div></div></div>
<div class="th" style="left:380.0px;top:1006.8px;width:112.0px;height:136.2px"><div class="in" style="position:relative;overflow:hidden;background:radial-gradient(ellipse 25% 35% at 95% 35%,rgba(30,90,170,.55),rgba(30,90,170,0)),radial-gradient(ellipse 35% 25% at 40% 80%,rgba(20,70,150,.35),rgba(20,70,150,0)),radial-gradient(ellipse 25% 20% at 25% 20%,rgba(15,50,120,.35),rgba(15,50,120,0)),linear-gradient(#02081a,#020a22);"><svg viewBox="0 0 100 100" preserveAspectRatio="none" style="position:absolute;left:0;top:0;width:100%;height:100%"><defs><filter id="f175" x="-10%" y="-10%" width="120%" height="120%"><feGaussianBlur stdDeviation="0.3"/></filter></defs><g filter="url(#f175)">
<g fill="#fff"><circle cx="34" cy="49" r="4.5"/><circle cx="78.4" cy="43.8" r="2.2"/><circle cx="50.5" cy="68" r="1.7"/><circle cx="36.6" cy="1.5" r="2"/><circle cx="40" cy="33" r="1"/><circle cx="88" cy="30" r="1"/></g>
<path d="M88,86 C94,84 96,90 92,94 C96,96 96,100 90,100" stroke="#fff" stroke-width="2" fill="none"/>
<path d="M5,85 C30,95 60,92 90,80" stroke="#3a7ab0" stroke-width=".8" fill="none" opacity=".6"/>
</g></svg><div style="position:absolute;inset:0;-webkit-mask-image:radial-gradient(ellipse 60% 60% at 50% 50%,#000 0%,rgba(0,0,0,.3) 100%);mask-image:radial-gradient(ellipse 60% 60% at 50% 50%,#000 0%,rgba(0,0,0,.3) 100%);"><svg style="position:absolute;left:0;top:0;width:100%;height:100%"><defs><filter id="s175" x="0" y="0" width="100%" height="100%"><feTurbulence type="fractalNoise" baseFrequency="0.6" numOctaves="2" seed="20"/><feColorMatrix type="matrix" values="0 0 0 0 0.8 0 0 0 0 0.9 0 0 0 0 1 30 0 0 0 -23.1"/><feGaussianBlur stdDeviation="0.35"/></filter></defs><rect width="100%" height="100%" filter="url(#s175)"/></svg></div></div></div>
<div class="th" style="left:573.8px;top:1006.8px;width:131.2px;height:136.2px"><div class="in" style="position:relative;overflow:hidden;background:#fcfcfc;box-shadow:inset 0 0 0 1px rgba(0,0,0,.35);"><svg viewBox="0 0 100 100" preserveAspectRatio="none" style="position:absolute;left:0;top:0;width:100%;height:100%"><defs><filter id="f176" x="-10%" y="-10%" width="120%" height="120%"><feGaussianBlur stdDeviation="1.0"/></filter></defs><g filter="url(#f176)">
<path d="M2,25 C8,22 14,24 20,28 C16,32 10,34 4,32Z" fill="#999" opacity=".7"/>
<path d="M48,36 C56,30 66,28 72,30 C66,34 56,38 50,40Z" fill="#aaa" opacity=".7"/>
<path d="M82,52 C90,56 96,58 100,60 V76 C94,74 88,70 84,64Z" fill="#777" opacity=".8"/>
<path d="M78,10 C84,16 90,24 94,34" stroke="#aaa" stroke-width="2" fill="none" opacity=".7"/>
<path d="M20,40 C18,46 16,52 14,58" stroke="#bbb" stroke-width="1.5" fill="none"/>
<ellipse cx="55" cy="60" rx="15" ry="18" fill="none" stroke="#ddd" stroke-width="2.5"/>
<g fill="#000"><circle cx="38.6" cy="5.5" r="3"/><circle cx="68.5" cy="31" r="4"/><circle cx="5.5" cy="37.3" r="2.2"/><circle cx="67.3" cy="66.6" r="1.5"/><circle cx="53.7" cy="52.6" r="1"/><circle cx="99" cy="99" r="2"/></g>
</g></svg><div style="position:absolute;inset:0;box-shadow:inset 0 0 0 1px rgba(0,0,0,.35)"></div></div></div>
<div class="th" style="left:784.0px;top:1006.8px;width:118.0px;height:136.2px"><div class="in" style="position:relative;overflow:hidden;background:radial-gradient(ellipse 40% 30% at 55% 30%,rgba(20,60,120,.5),rgba(20,60,120,0)),linear-gradient(#020a22,#010818);"><svg viewBox="0 0 100 100" preserveAspectRatio="none" style="position:absolute;left:0;top:0;width:100%;height:100%"><defs><filter id="f177" x="-10%" y="-10%" width="120%" height="120%"><feGaussianBlur stdDeviation="0.4"/></filter></defs><g filter="url(#f177)">
<path d="M0,80 C14,88 30,96 47.6,96 C50,92 52,96 54,98 C70,96 88,90 100,84 V100 H0Z" fill="#fff"/>
<path d="M0,78 C14,86 30,94 47.6,94 C66,94 86,88 100,82" stroke="#5ab8d8" stroke-width="1.5" fill="none" opacity=".8"/>
<circle cx="36.2" cy="23.7" r="5.5" fill="#2a98d0" opacity=".7"/>
<g fill="#fff"><circle cx="36.2" cy="23.7" r="4"/><circle cx="11.4" cy="47.6" r="2.6"/><circle cx="43" cy="74.9" r="2"/><circle cx="71" cy="24.6" r="1.6"/><circle cx="58.6" cy="34.9" r="1.1"/><circle cx="41" cy="90" r="1.5"/></g>
</g></svg></div></div>
<div class="th" style="left:986.4px;top:1006.8px;width:118.1px;height:136.2px"><div class="in" style="position:relative;overflow:hidden;background:#030303;"><svg viewBox="0 0 100 100" preserveAspectRatio="none" style="position:absolute;left:0;top:0;width:100%;height:100%"><defs><filter id="f178" x="-10%" y="-10%" width="120%" height="120%"><feGaussianBlur stdDeviation="1.2"/></filter></defs><g filter="url(#f178)">
<path d="M92,60 C98,66 100,74 98,84 C94,88 88,86 88,80 C86,72 88,64 92,60Z" fill="#bbb"/>
<path d="M60,4 C70,2 80,6 90,10 C84,14 74,14 66,12Z" fill="#777"/>
<path d="M2,50 C6,46 10,50 8,58 C6,62 2,60 2,50Z" fill="#666"/>
<path d="M46,50 C56,46 66,50 72,56" stroke="#888" stroke-width="2" fill="none"/>
<path d="M20,70 C30,80 50,86 70,84" stroke="#333" stroke-width="3" fill="none"/>
<g fill="#fff"><circle cx="31" cy="18.6" r="3.2"/><circle cx="61.7" cy="45.3" r="4.2"/><circle cx="55.7" cy="6.8" r="2"/><circle cx="63.8" cy="79.9" r="1.6"/><circle cx="47" cy="68" r="1.1"/></g>
</g></svg><div style="position:absolute;inset:0;-webkit-mask-image:radial-gradient(ellipse 60% 60% at 50% 50%,#000 0%,rgba(0,0,0,.2) 100%);mask-image:radial-gradient(ellipse 60% 60% at 50% 50%,#000 0%,rgba(0,0,0,.2) 100%);"><svg style="position:absolute;left:0;top:0;width:100%;height:100%"><defs><filter id="s178" x="0" y="0" width="100%" height="100%"><feTurbulence type="fractalNoise" baseFrequency="0.6" numOctaves="2" seed="19"/><feColorMatrix type="matrix" values="0 0 0 0 1 0 0 0 0 1 0 0 0 0 1 30 0 0 0 -22.2"/><feGaussianBlur stdDeviation="0.35"/></filter></defs><rect width="100%" height="100%" filter="url(#s178)"/></svg></div></div></div>
<div class="th" style="left:1201.4px;top:1006.8px;width:96.4px;height:136.2px"><div class="in" style="position:relative;overflow:hidden;background:radial-gradient(ellipse 30% 50% at 10% 35%,rgba(75,75,75,0.8) 0%,rgba(75,75,75,0) 100%),radial-gradient(ellipse 30% 35% at 70% 30%,rgba(45,45,45,0.6) 0%,rgba(45,45,45,0) 100%),linear-gradient(#080808,#060606);"><div style="position:absolute;inset:0;-webkit-mask-image:radial-gradient(ellipse 70% 60% at 10% 30%,#000 0%,rgba(0,0,0,.25) 100%);mask-image:radial-gradient(ellipse 70% 60% at 10% 30%,#000 0%,rgba(0,0,0,.25) 100%);"><svg style="position:absolute;left:0;top:0;width:100%;height:100%"><defs><filter id="s179" x="0" y="0" width="100%" height="100%"><feTurbulence type="fractalNoise" baseFrequency="0.6" numOctaves="2" seed="3"/><feColorMatrix type="matrix" values="0 0 0 0 1 0 0 0 0 1 0 0 0 0 1 30 0 0 0 -19.8"/><feGaussianBlur stdDeviation="0.35"/></filter></defs><rect width="100%" height="100%" filter="url(#s179)"/></svg></div></div></div>
<div class="th" style="left:1405.0px;top:1006.8px;width:95.4px;height:136.2px"><div class="in" style="position:relative;overflow:hidden;background:radial-gradient(ellipse 18% 15% at 5% 20%,rgba(140,140,140,0.7) 0%,rgba(140,140,140,0) 100%),radial-gradient(ellipse 30% 25% at 70% 70%,rgba(210,210,210,0.6) 0%,rgba(210,210,210,0) 100%),linear-gradient(#f9f9f9,#f4f4f4);box-shadow:inset 0 0 0 1px rgba(0,0,0,.35);"><div style="position:absolute;inset:0;-webkit-mask-image:radial-gradient(ellipse 50% 40% at 70% 75%,#000 0%,rgba(0,0,0,.15) 100%);mask-image:radial-gradient(ellipse 50% 40% at 70% 75%,#000 0%,rgba(0,0,0,.15) 100%);"><svg style="position:absolute;left:0;top:0;width:100%;height:100%"><defs><filter id="s180" x="0" y="0" width="100%" height="100%"><feTurbulence type="fractalNoise" baseFrequency="0.6" numOctaves="2" seed="22"/><feColorMatrix type="matrix" values="0 0 0 0 0 0 0 0 0 0 0 0 0 0 0 30 0 0 0 -21.599999999999998"/><feGaussianBlur stdDeviation="0.35"/></filter></defs><rect width="100%" height="100%" filter="url(#s180)"/></svg></div></div></div>
<div class="th" style="left:1608.4px;top:1006.8px;width:95.3px;height:136.2px"><div class="in" style="position:relative;overflow:hidden;background:radial-gradient(ellipse 40% 50% at 80% 40%,rgba(50,50,50,.5),rgba(50,50,50,0)),linear-gradient(#050505,#030303);"><svg viewBox="0 0 100 100" preserveAspectRatio="none" style="position:absolute;left:0;top:0;width:100%;height:100%"><defs><filter id="f181" x="-10%" y="-10%" width="120%" height="120%"><feGaussianBlur stdDeviation="1.8"/></filter></defs><g filter="url(#f181)">
<path d="M0,10 C20,14 40,20 60,28 L58,32 C40,26 20,20 0,18Z" fill="#c8c8c8"/>
<path d="M30,18 C40,22 50,26 60,28 L58,31 C48,28 40,25 30,22Z" fill="#888"/>
</g></svg><div style="position:absolute;inset:0;-webkit-mask-image:radial-gradient(ellipse 80% 70% at 70% 30%,#000 0%,rgba(0,0,0,.2) 100%);mask-image:radial-gradient(ellipse 80% 70% at 70% 30%,#000 0%,rgba(0,0,0,.2) 100%);"><svg style="position:absolute;left:0;top:0;width:100%;height:100%"><defs><filter id="s181" x="0" y="0" width="100%" height="100%"><feTurbulence type="fractalNoise" baseFrequency="0.6" numOctaves="2" seed="5"/><feColorMatrix type="matrix" values="0 0 0 0 1 0 0 0 0 1 0 0 0 0 1 30 0 0 0 -21.0"/><feGaussianBlur stdDeviation="0.35"/></filter></defs><rect width="100%" height="100%" filter="url(#s181)"/></svg></div></div></div>
<div class="th" style="left:388.2px;top:1246.8px;width:95.4px;height:136.2px"><div class="in" style="position:relative;overflow:hidden;background:radial-gradient(ellipse 30% 30% at 10% 60%,rgba(30,70,130,.5),rgba(30,70,130,0)),linear-gradient(#04101e,#030a14);"><svg viewBox="0 0 100 100" preserveAspectRatio="none" style="position:absolute;left:0;top:0;width:100%;height:100%"><defs><filter id="f182" x="-10%" y="-10%" width="120%" height="120%"><feGaussianBlur stdDeviation="1.8"/></filter></defs><g filter="url(#f182)">
<path d="M0,12 C30,18 60,24 100,30 V38 C60,32 30,26 0,22Z" fill="#dfffd0"/>
<path d="M40,20 C60,24 80,28 100,31 V37 C80,34 60,30 40,27Z" fill="#90d0c0" opacity=".8"/>
<path d="M55,24 C70,27 85,30 100,32 V36 C85,34 70,31 55,29Z" fill="#c090c8" opacity=".5"/>
<ellipse cx="67" cy="66" rx="8" ry="3.5" fill="#9a70b0"/>
<ellipse cx="95" cy="56" rx="4" ry="3" fill="#2a70c0"/>
</g></svg><div style="position:absolute;inset:0;-webkit-mask-image:radial-gradient(ellipse 70% 60% at 50% 50%,#000 0%,rgba(0,0,0,.4) 100%);mask-image:radial-gradient(ellipse 70% 60% at 50% 50%,#000 0%,rgba(0,0,0,.4) 100%);"><svg style="position:absolute;left:0;top:0;width:100%;height:100%"><defs><filter id="s182" x="0" y="0" width="100%" height="100%"><feTurbulence type="fractalNoise" baseFrequency="0.6" numOctaves="2" seed="7"/><feColorMatrix type="matrix" values="0 0 0 0 0.85 0 0 0 0 0.95 0 0 0 0 0.9 30 0 0 0 -22.2"/><feGaussianBlur stdDeviation="0.35"/></filter></defs><rect width="100%" height="100%" filter="url(#s182)"/></svg></div></div></div>
<div class="th" style="left:587.0px;top:1246.8px;width:105.5px;height:136.2px"><div class="in" style="position:relative;overflow:hidden;background:linear-gradient(#030a12,#02060a);"><svg viewBox="0 0 100 100" preserveAspectRatio="none" style="position:absolute;left:0;top:0;width:100%;height:100%"><defs><filter id="f183" x="-10%" y="-10%" width="120%" height="120%"><feGaussianBlur stdDeviation="4.5"/></filter></defs><g filter="url(#f183)">
<path d="M0,0 H60 C58,10 50,20 46,30 C42,40 38,50 32,56 C22,52 10,46 0,42Z" fill="#2a8a9a" opacity=".85"/>
<path d="M0,0 H45 C40,10 34,22 28,34 C20,32 10,28 0,26Z" fill="#4ab0b8" opacity=".6"/>
</g></svg><div style="position:absolute;inset:0;-webkit-mask-image:radial-gradient(ellipse 60% 50% at 30% 30%,#000 0%,rgba(0,0,0,.2) 100%);mask-image:radial-gradient(ellipse 60% 50% at 30% 30%,#000 0%,rgba(0,0,0,.2) 100%);"><svg style="position:absolute;left:0;top:0;width:100%;height:100%"><defs><filter id="s183" x="0" y="0" width="100%" height="100%"><feTurbulence type="fractalNoise" baseFrequency="0.6" numOctaves="2" seed="8"/><feColorMatrix type="matrix" values="0 0 0 0 0.7 0 0 0 0 0.9 0 0 0 0 0.9 30 0 0 0 -22.8"/><feGaussianBlur stdDeviation="0.35"/></filter></defs><rect width="100%" height="100%" filter="url(#s183)"/></svg></div></div></div>
<div class="th" style="left:784.0px;top:1246.8px;width:117.4px;height:136.2px"><div class="in" style="position:relative;overflow:hidden;background:linear-gradient(#02060e,#02060c);"><svg viewBox="0 0 100 100" preserveAspectRatio="none" style="position:absolute;left:0;top:0;width:100%;height:100%"><defs><filter id="f184" x="-10%" y="-10%" width="120%" height="120%"><feGaussianBlur stdDeviation="4.5"/></filter></defs><g filter="url(#f184)">
<path d="M0,40 C6,56 16,72 30,84 C42,92 54,96 62,100 H0Z" fill="#2a98a8" opacity=".9"/>
<path d="M0,60 C8,74 20,86 40,100 H0Z" fill="#5ac0c8" opacity=".6"/>
<ellipse cx="61" cy="55" rx="7" ry="6" fill="#a898c0" opacity=".8"/>
</g></svg><div style="position:absolute;inset:0;-webkit-mask-image:radial-gradient(ellipse 60% 60% at 10% 80%,#000 0%,rgba(0,0,0,.2) 100%);mask-image:radial-gradient(ellipse 60% 60% at 10% 80%,#000 0%,rgba(0,0,0,.2) 100%);"><svg style="position:absolute;left:0;top:0;width:100%;height:100%"><defs><filter id="s184" x="0" y="0" width="100%" height="100%"><feTurbulence type="fractalNoise" baseFrequency="0.6" numOctaves="2" seed="9"/><feColorMatrix type="matrix" values="0 0 0 0 0.7 0 0 0 0 0.9 0 0 0 0 0.9 30 0 0 0 -22.8"/><feGaussianBlur stdDeviation="0.35"/></filter></defs><rect width="100%" height="100%" filter="url(#s184)"/></svg></div></div></div>
<div class="th" style="left:998.0px;top:1246.8px;width:95.0px;height:136.2px"><div class="in" style="position:relative;overflow:hidden;background:linear-gradient(#02060c,#030a10);"><svg viewBox="0 0 100 100" preserveAspectRatio="none" style="position:absolute;left:0;top:0;width:100%;height:100%"><defs><filter id="f185" x="-10%" y="-10%" width="120%" height="120%"><feGaussianBlur stdDeviation="3.0"/></filter></defs><g filter="url(#f185)">
<path d="M100,35 C92,45 86,60 84,80 C88,90 94,96 100,98Z" fill="#2a8090" opacity=".8"/>
<path d="M10,84 C40,88 70,94 100,98 V100 H30 C20,96 14,90 10,84Z" fill="#d0f0d8" opacity=".9"/>
<path d="M40,90 C60,93 80,96 100,98 V100 H60Z" fill="#c080c8" opacity=".6"/>
<ellipse cx="40" cy="40" rx="8" ry="6" fill="#6a6a90" opacity=".6"/>
</g></svg></div></div>
<div class="th" style="left:1201.8px;top:1246.8px;width:95.2px;height:136.2px"><div class="in" style="position:relative;overflow:hidden;background:#fafcfd;box-shadow:inset 0 0 0 1px rgba(0,0,0,.35);"><svg viewBox="0 0 100 100" preserveAspectRatio="none" style="position:absolute;left:0;top:0;width:100%;height:100%"><defs><filter id="f186" x="-10%" y="-10%" width="120%" height="120%"><feGaussianBlur stdDeviation="2.6"/></filter></defs><g filter="url(#f186)">
<path d="M0,20 C20,18 40,22 56,28 C50,40 40,52 30,58 C20,60 10,58 0,56Z" fill="#5aa8cc" opacity=".7"/>
<path d="M0,0 H62 C70,4 80,10 100,14 V22 C86,20 70,18 50,18 C30,16 12,20 0,26Z" fill="#0a3a70"/>
<path d="M0,20 C14,22 30,26 42,30 C30,34 14,36 0,38Z" fill="#1a5a90" opacity=".8"/>
<ellipse cx="80" cy="7" rx="14" ry="6" fill="#fff"/>
<path d="M36,66 C34,58 38,50 46,52 C50,56 46,62 40,70Z" fill="#1a70a0"/>
<path d="M46,52 C48,44 48,38 46,32" stroke="#5aa8cc" stroke-width="4" fill="none" opacity=".7"/>
<ellipse cx="99" cy="35" rx="4" ry="10" fill="#0a4a80"/>
</g></svg><div style="position:absolute;inset:0;box-shadow:inset 0 0 0 1px rgba(0,0,0,.35)"></div></div></div>
<div class="th" style="left:1399.0px;top:1246.8px;width:106.6px;height:136.2px"><div class="in" style="position:relative;overflow:hidden;background:#fbfdfd;box-shadow:inset 0 0 0 1px rgba(0,0,0,.35);"><svg viewBox="0 0 100 100" preserveAspectRatio="none" style="position:absolute;left:0;top:0;width:100%;height:100%"><defs><filter id="f187" x="-10%" y="-10%" width="120%" height="120%"><feGaussianBlur stdDeviation="2.8"/></filter></defs><g filter="url(#f187)">
<path d="M62,0 H100 V40 C90,36 80,30 70,20 C66,14 64,8 62,0Z" fill="#5aa8c0" opacity=".55"/>
<path d="M82,0 H100 V30 C94,24 88,16 82,0Z" fill="#1a6a98" opacity=".7"/>
<path d="M22,36 C30,32 40,36 50,44 C58,52 60,58 56,62 C48,64 44,56 38,52 C28,48 20,44 22,36Z" fill="#1a7a9a"/>
<path d="M62,40 C74,38 88,40 100,38 V54 C88,54 74,52 62,50Z" fill="#3a9ab8" opacity=".7"/>
<ellipse cx="78" cy="99" rx="22" ry="12" fill="#1a6a98"/>
</g></svg><div style="position:absolute;inset:0;box-shadow:inset 0 0 0 1px rgba(0,0,0,.35)"></div></div></div>
<div class="th" style="left:1598.3px;top:1246.8px;width:116.7px;height:136.2px"><div class="in" style="position:relative;overflow:hidden;background:linear-gradient(#fdfefe 0%,#fafdfd 50%,#d8f0f6 70%,#c0e6f0 100%);box-shadow:inset 0 0 0 1px rgba(0,0,0,.35);"><svg viewBox="0 0 100 100" preserveAspectRatio="none" style="position:absolute;left:0;top:0;width:100%;height:100%"><defs><filter id="f188" x="-10%" y="-10%" width="120%" height="120%"><feGaussianBlur stdDeviation="2.6"/></filter></defs><g filter="url(#f188)">
<ellipse cx="6" cy="82" rx="11" ry="18" fill="#0a3a70"/>
<path d="M55,86 C64,80 80,78 100,72 V100 H55Z" fill="#0a3a70"/>
<path d="M50,78 C60,74 80,72 100,66 V76 C80,80 60,82 50,84Z" fill="#2a7aa8" opacity=".6"/>
<path d="M0,96 C20,98 40,98 55,96 V100 H0Z" fill="#0a3a70"/>
</g></svg><div style="position:absolute;inset:0;box-shadow:inset 0 0 0 1px rgba(0,0,0,.35)"></div></div></div>
<div class="th" style="left:382.7px;top:1487.0px;width:107.3px;height:136.6px"><div class="in" style="position:relative;overflow:hidden;background:radial-gradient(ellipse 60% 50% at 80% 80%,#ffffff 0%,#fdffff 40%,rgba(255,255,255,0) 100%),linear-gradient(#c8efee,#d8f4f2);box-shadow:inset 0 0 0 1px rgba(0,0,0,.35);"><svg viewBox="0 0 100 100" preserveAspectRatio="none" style="position:absolute;left:0;top:0;width:100%;height:100%"><defs><filter id="f189" x="-10%" y="-10%" width="120%" height="120%"><feGaussianBlur stdDeviation="1.0"/></filter></defs><g filter="url(#f189)">
<path d="M0,0 H100 V20 C70,14 40,8 0,4Z" fill="#e0f8f8" opacity=".8"/>
<path d="M0,7 C35,14 70,22 100,28.4 V38.4 C70,32 35,26 0,19.9Z" fill="#1a4a8a"/>
<path d="M50,18 C70,22 85,26 100,28.4 V38.4 C85,35 70,32 50,28Z" fill="#3a8ab8" opacity=".8"/>
<path d="M60,22 C70,24 78,26 85,28 V34 C78,33 70,31 60,29Z" fill="#6a5aa0" opacity=".6"/>
<ellipse cx="6" cy="12" rx="5" ry="3" fill="#fff"/><ellipse cx="20" cy="18" rx="4" ry="2.5" fill="#fff"/><ellipse cx="40" cy="27" rx="5" ry="2.5" fill="#fff"/>
</g></svg><div style="position:absolute;inset:0;box-shadow:inset 0 0 0 1px rgba(0,0,0,.35)"></div></div></div>
<div class="th" style="left:591.3px;top:1487.0px;width:95.7px;height:136.6px"><div class="in" style="position:relative;overflow:hidden;background:radial-gradient(ellipse 35% 25% at 30% 72%,rgba(180,225,225,.8),rgba(180,225,225,0)),linear-gradient(#fdfefe,#f6fbfb);box-shadow:inset 0 0 0 1px rgba(0,0,0,.35);"><svg viewBox="0 0 100 100" preserveAspectRatio="none" style="position:absolute;left:0;top:0;width:100%;height:100%"><defs><filter id="f190" x="-10%" y="-10%" width="120%" height="120%"><feGaussianBlur stdDeviation="1.6"/></filter></defs><g filter="url(#f190)">
<path d="M0,88 C30,84 60,78 92,72 V78 C60,86 30,94 0,100Z" fill="#2a80b0" opacity=".7"/>
<path d="M0,92 C25,88 45,84 65,80 V84 C45,90 25,96 0,100Z" fill="#1a5a98"/>
</g></svg><div style="position:absolute;inset:0;box-shadow:inset 0 0 0 1px rgba(0,0,0,.35)"></div><div style="position:absolute;inset:0;-webkit-mask-image:radial-gradient(ellipse 50% 40% at 40% 60%,#000 0%,rgba(0,0,0,.15) 100%);mask-image:radial-gradient(ellipse 50% 40% at 40% 60%,#000 0%,rgba(0,0,0,.15) 100%);"><svg style="position:absolute;left:0;top:0;width:100%;height:100%"><defs><filter id="s190" x="0" y="0" width="100%" height="100%"><feTurbulence type="fractalNoise" baseFrequency="0.6" numOctaves="2" seed="23"/><feColorMatrix type="matrix" values="0 0 0 0 0.1 0 0 0 0 0.3 0 0 0 0 0.35 30 0 0 0 -21.599999999999998"/><feGaussianBlur stdDeviation="0.35"/></filter></defs><rect width="100%" height="100%" filter="url(#s190)"/></svg></div></div></div>
<div class="th" style="left:795.0px;top:1487.0px;width:95.0px;height:136.6px"><div class="in" style="position:relative;overflow:hidden;background:radial-gradient(ellipse 50% 40% at 20% 20%,rgba(90,120,120,.75),rgba(90,120,120,0)),radial-gradient(ellipse 40% 50% at 30% 50%,rgba(50,70,70,.5),rgba(50,70,70,0)),linear-gradient(#040808,#020404);"><svg viewBox="0 0 100 100" preserveAspectRatio="none" style="position:absolute;left:0;top:0;width:100%;height:100%"><defs><filter id="f191" x="-10%" y="-10%" width="120%" height="120%"><feGaussianBlur stdDeviation="1.2"/></filter></defs><g filter="url(#f191)">
<path d="M30,12 C50,14 75,18 100,22 V30 C75,28 50,22 30,18Z" fill="#4a8a9a" opacity=".6"/>
<path d="M100,70 C92,76 88,86 90,99 H100Z" fill="#e83a50"/>
<path d="M100,78 C96,82 94,90 95,99 H100Z" fill="#ffe0d0"/>
<ellipse cx="72" cy="56" rx="5" ry="4" fill="#1a4a88" opacity=".8"/>
</g></svg><div style="position:absolute;inset:0;-webkit-mask-image:radial-gradient(ellipse 70% 60% at 25% 25%,#000 0%,rgba(0,0,0,.25) 100%);mask-image:radial-gradient(ellipse 70% 60% at 25% 25%,#000 0%,rgba(0,0,0,.25) 100%);"><svg style="position:absolute;left:0;top:0;width:100%;height:100%"><defs><filter id="s191" x="0" y="0" width="100%" height="100%"><feTurbulence type="fractalNoise" baseFrequency="0.6" numOctaves="2" seed="11"/><feColorMatrix type="matrix" values="0 0 0 0 0.8 0 0 0 0 0.95 0 0 0 0 0.95 30 0 0 0 -19.2"/><feGaussianBlur stdDeviation="0.35"/></filter></defs><rect width="100%" height="100%" filter="url(#s191)"/></svg></div></div></div>
<div class="th" style="left:998.0px;top:1487.0px;width:95.0px;height:136.6px"><div class="in" style="position:relative;overflow:hidden;background:linear-gradient(180deg,#0a3a68 0%,#2a6a98 16%,#b0dce8 38%,#e0f2f6 60%,#c8e4ec 100%);"><svg viewBox="0 0 100 100" preserveAspectRatio="none" style="position:absolute;left:0;top:0;width:100%;height:100%"><defs><filter id="f192" x="-10%" y="-10%" width="120%" height="120%"><feGaussianBlur stdDeviation="1.4"/></filter></defs><g filter="url(#f192)">
<path d="M0,0 H100 V22 C80,28 60,20 40,24 C25,26 10,22 0,26Z" fill="#0a3060"/>
<g stroke="#fff" stroke-width="2" opacity=".8"><line x1="70" y1="2" x2="70" y2="20"/><line x1="80" y1="2" x2="80" y2="28"/><line x1="88" y1="2" x2="88" y2="18"/><line x1="95" y1="2" x2="95" y2="24"/><line x1="40" y1="30" x2="40" y2="80"/><line x1="55" y1="28" x2="55" y2="70"/></g>
<ellipse cx="90" cy="57" rx="9" ry="8" fill="#0a2a50"/>
<path d="M85,64 C88,72 84,80 86,90 C90,94 96,96 100,98 V60Z" fill="#5a9ab8" opacity=".7"/>
<ellipse cx="92" cy="97" rx="10" ry="4" fill="#2a3050" opacity=".8"/>
</g></svg><div style="position:absolute;inset:0;-webkit-mask-image:radial-gradient(ellipse 60% 60% at 50% 60%,#000 0%,rgba(0,0,0,.3) 100%);mask-image:radial-gradient(ellipse 60% 60% at 50% 60%,#000 0%,rgba(0,0,0,.3) 100%);"><svg style="position:absolute;left:0;top:0;width:100%;height:100%"><defs><filter id="s192" x="0" y="0" width="100%" height="100%"><feTurbulence type="fractalNoise" baseFrequency="0.6" numOctaves="2" seed="21"/><feColorMatrix type="matrix" values="0 0 0 0 0.05 0 0 0 0 0.15 0 0 0 0 0.3 30 0 0 0 -21.0"/><feGaussianBlur stdDeviation="0.35"/></filter></defs><rect width="100%" height="100%" filter="url(#s192)"/></svg></div></div></div>
<div class="th" style="left:1201.8px;top:1487.0px;width:96.0px;height:136.6px"><div class="in" style="position:relative;overflow:hidden;background:linear-gradient(#050808,#020404);"><svg viewBox="0 0 100 100" preserveAspectRatio="none" style="position:absolute;left:0;top:0;width:100%;height:100%"><defs><filter id="f193" x="-10%" y="-10%" width="120%" height="120%"><feGaussianBlur stdDeviation="3.0"/></filter></defs><g filter="url(#f193)">
<ellipse cx="65" cy="2" rx="42" ry="26" fill="#a8c8b0" opacity=".9"/>
<ellipse cx="60" cy="20" rx="45" ry="20" fill="#3a5a50" opacity=".6"/>
<path d="M0,42 C30,46 60,44 100,40" stroke="#889a90" stroke-width="2" fill="none" opacity=".6"/>
<ellipse cx="75" cy="60" rx="15" ry="14" fill="#1a3a48" opacity=".5"/>
</g></svg><div style="position:absolute;inset:0;-webkit-mask-image:radial-gradient(ellipse 60% 45% at 55% 15%,#000 0%,rgba(0,0,0,.2) 100%);mask-image:radial-gradient(ellipse 60% 45% at 55% 15%,#000 0%,rgba(0,0,0,.2) 100%);"><svg style="position:absolute;left:0;top:0;width:100%;height:100%"><defs><filter id="s193" x="0" y="0" width="100%" height="100%"><feTurbulence type="fractalNoise" baseFrequency="0.6" numOctaves="2" seed="12"/><feColorMatrix type="matrix" values="0 0 0 0 0.85 0 0 0 0 0.95 0 0 0 0 0.9 30 0 0 0 -19.2"/><feGaussianBlur stdDeviation="0.35"/></filter></defs><rect width="100%" height="100%" filter="url(#s193)"/></svg></div></div></div>
<div class="th" style="left:1405.0px;top:1487.0px;width:95.4px;height:136.6px"><div class="in" style="position:relative;overflow:hidden;background:linear-gradient(#040606,#020404);"><svg viewBox="0 0 100 100" preserveAspectRatio="none" style="position:absolute;left:0;top:0;width:100%;height:100%"><defs><filter id="f194" x="-10%" y="-10%" width="120%" height="120%"><feGaussianBlur stdDeviation="3.0"/></filter></defs><g filter="url(#f194)">
<ellipse cx="12" cy="8" rx="30" ry="12" fill="#d8d8b0"/>
<ellipse cx="30" cy="22" rx="45" ry="18" fill="#3a5048" opacity=".7"/>
<path d="M0,48 C30,50 60,50 100,44" stroke="#889a90" stroke-width="2" fill="none" opacity=".5"/>
</g></svg><div style="position:absolute;inset:0;-webkit-mask-image:radial-gradient(ellipse 60% 40% at 30% 15%,#000 0%,rgba(0,0,0,.2) 100%);mask-image:radial-gradient(ellipse 60% 40% at 30% 15%,#000 0%,rgba(0,0,0,.2) 100%);"><svg style="position:absolute;left:0;top:0;width:100%;height:100%"><defs><filter id="s194" x="0" y="0" width="100%" height="100%"><feTurbulence type="fractalNoise" baseFrequency="0.6" numOctaves="2" seed="13"/><feColorMatrix type="matrix" values="0 0 0 0 0.85 0 0 0 0 0.95 0 0 0 0 0.9 30 0 0 0 -19.2"/><feGaussianBlur stdDeviation="0.35"/></filter></defs><rect width="100%" height="100%" filter="url(#s194)"/></svg></div></div></div>
<div class="th" style="left:1598.3px;top:1487.0px;width:116.7px;height:136.6px"><div class="in" style="position:relative;overflow:hidden;background:#f4fafc;box-shadow:inset 0 0 0 1px rgba(0,0,0,.35);"><svg viewBox="0 0 100 100" preserveAspectRatio="none" style="position:absolute;left:0;top:0;width:100%;height:100%"><defs><filter id="f195" x="-10%" y="-10%" width="120%" height="120%"><feGaussianBlur stdDeviation="1.6"/></filter></defs><g filter="url(#f195)">
<path d="M0,0 H34 C28,14 28,30 32,44 C22,48 10,50 0,52Z" fill="#0a3a6a"/>
<path d="M62,0 H100 V40 C90,36 80,34 72,30 C68,20 64,10 62,0Z" fill="#0a3a6a"/>
<path d="M34,0 H62 C64,10 68,20 72,30 C64,34 58,40 54,46 C44,40 34,28 34,0Z" fill="#5a9ac0"/>
<path d="M40,0 C40,16 46,30 56,40 C60,34 64,30 70,26 C66,16 62,8 60,0Z" fill="#b8e0ee" opacity=".8"/>
<ellipse cx="48" cy="40" rx="8" ry="8" fill="#0a3a6a" opacity=".8"/>
<path d="M0,52 C10,48 20,46 32,46 C30,56 20,60 0,62Z" fill="#8ac0d8" opacity=".6"/>
<path d="M0,95 H100 V100 H0Z" fill="#0a3060"/>
<path d="M0,84 C20,88 30,92 40,95 H0Z" fill="#a8d8e4" opacity=".6"/>
</g></svg><div style="position:absolute;inset:0;box-shadow:inset 0 0 0 1px rgba(0,0,0,.35)"></div></div></div>
<div class="lb" style="left:326.0px;top:444.6px">JONTI WILD<br>TEXTURE-154.jpg</div>
<div class="lb" style="left:529.4px;top:444.6px">JONTI WILD<br>TEXTURE-155.jpg</div>
<div class="lb" style="left:732.8px;top:444.6px">JONTI WILD<br>TEXTURE-156.jpg</div>
<div class="lb" style="left:936.3px;top:444.6px">JONTI WILD<br>TEXTURE-157.jpg</div>
<div class="lb" style="left:1139.7px;top:444.6px">JONTI WILD<br>TEXTURE-158.jpg</div>
<div class="lb" style="left:1343.1px;top:444.6px">JONTI WILD<br>TEXTURE-159.jpg</div>
<div class="lb" style="left:1546.5px;top:444.6px">JONTI WILD<br>TEXTURE-160.jpg</div>
<div class="lb" style="left:326.0px;top:685.0px">JONTI WILD<br>TEXTURE-161.jpg</div>
<div class="lb" style="left:529.4px;top:685.0px">JONTI WILD<br>TEXTURE-162.jpg</div>
<div class="lb" style="left:732.8px;top:685.0px">JONTI WILD<br>TEXTURE-163.jpg</div>
<div class="lb" style="left:936.3px;top:685.0px">JONTI WILD<br>TEXTURE-164.jpg</div>
<div class="lb" style="left:1139.7px;top:685.0px">JONTI WILD<br>TEXTURE-165.jpg</div>
<div class="lb" style="left:1343.1px;top:685.0px">JONTI WILD<br>TEXTURE-166.jpg</div>
<div class="lb" style="left:1546.5px;top:685.0px">JONTI WILD<br>TEXTURE-167.jpg</div>
<div class="lb" style="left:326.0px;top:925.3px">JONTI WILD<br>TEXTURE-168.jpg</div>
<div class="lb" style="left:529.4px;top:925.3px">JONTI WILD<br>TEXTURE-169.jpg</div>
<div class="lb" style="left:732.8px;top:925.3px">JONTI WILD<br>TEXTURE-170.jpg</div>
<div class="lb" style="left:936.3px;top:925.3px">JONTI WILD<br>TEXTURE-171.jpg</div>
<div class="lb" style="left:1139.7px;top:925.3px">JONTI WILD<br>TEXTURE-172.jpg</div>
<div class="lb" style="left:1343.1px;top:925.3px">JONTI WILD<br>TEXTURE-173.jpg</div>
<div class="lb" style="left:1546.5px;top:925.3px">JONTI WILD<br>TEXTURE-174.jpg</div>
<div class="lb" style="left:326.0px;top:1165.7px">JONTI WILD<br>TEXTURE-175.jpg</div>
<div class="lb" style="left:529.4px;top:1165.7px">JONTI WILD<br>TEXTURE-176.jpg</div>
<div class="lb" style="left:732.8px;top:1165.7px">JONTI WILD<br>TEXTURE-177.jpg</div>
<div class="lb" style="left:936.3px;top:1165.7px">JONTI WILD<br>TEXTURE-178.jpg</div>
<div class="lb" style="left:1139.7px;top:1165.7px">JONTI WILD<br>TEXTURE-179.jpg</div>
<div class="lb" style="left:1343.1px;top:1165.7px">JONTI WILD<br>TEXTURE-180.jpg</div>
<div class="lb" style="left:1546.5px;top:1165.7px">JONTI WILD<br>TEXTURE-181.jpg</div>
<div class="lb" style="left:326.0px;top:1406.0px">JONTI WILD<br>TEXTURE-182.jpg</div>
<div class="lb" style="left:529.4px;top:1406.0px">JONTI WILD<br>TEXTURE-183.jpg</div>
<div class="lb" style="left:732.8px;top:1406.0px">JONTI WILD<br>TEXTURE-184.jpg</div>
<div class="lb" style="left:936.3px;top:1406.0px">JONTI WILD<br>TEXTURE-185.jpg</div>
<div class="lb" style="left:1139.7px;top:1406.0px">JONTI WILD<br>TEXTURE-186.jpg</div>
<div class="lb" style="left:1343.1px;top:1406.0px">JONTI WILD<br>TEXTURE-187.jpg</div>
<div class="lb" style="left:1546.5px;top:1406.0px">JONTI WILD<br>TEXTURE-188.jpg</div>
<div class="lb" style="left:326.0px;top:1646.3px">JONTI WILD<br>TEXTURE-189.jpg</div>
<div class="lb" style="left:529.4px;top:1646.3px">JONTI WILD<br>TEXTURE-190.jpg</div>
<div class="lb" style="left:732.8px;top:1646.3px">JONTI WILD<br>TEXTURE-191.jpg</div>
<div class="lb" style="left:936.3px;top:1646.3px">JONTI WILD<br>TEXTURE-192.jpg</div>
<div class="lb" style="left:1139.7px;top:1646.3px">JONTI WILD<br>TEXTURE-193.jpg</div>
<div class="lb" style="left:1343.1px;top:1646.3px">JONTI WILD<br>TEXTURE-194.jpg</div>
<div class="lb" style="left:1546.5px;top:1646.3px">JONTI WILD<br>TEXTURE-195.jpg</div>
</div>
<div id="winb"></div>
</div></body></html>
